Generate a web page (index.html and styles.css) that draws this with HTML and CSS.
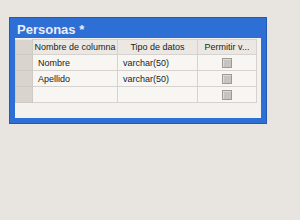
FILE: index.html
```html
<!DOCTYPE html>
<html lang="es">
<head>
    <meta charset="UTF-8">
    <title>Personas</title>
    <link rel="stylesheet" href="styles.css">
</head>
<body>
    <div class="panel">
        <div class="panel-title">Personas *</div>
        <div class="panel-body">
            <table class="grid">
                <colgroup>
                    <col class="c-sel">
                    <col class="c-name">
                    <col class="c-type">
                    <col class="c-null">
                </colgroup>
                <thead>
                    <tr>
                        <th class="sel"></th>
                        <th>Nombre de columna</th>
                        <th>Tipo de datos</th>
                        <th>Permitir v...</th>
                    </tr>
                </thead>
                <tbody>
                    <tr>
                        <td class="sel"></td>
                        <td>Nombre</td>
                        <td>varchar(50)</td>
                        <td class="chk"><span class="box"></span></td>
                    </tr>
                    <tr>
                        <td class="sel"></td>
                        <td>Apellido</td>
                        <td>varchar(50)</td>
                        <td class="chk"><span class="box"></span></td>
                    </tr>
                    <tr>
                        <td class="sel"></td>
                        <td></td>
                        <td></td>
                        <td class="chk"><span class="box"></span></td>
                    </tr>
                </tbody>
            </table>
        </div>
    </div>
</body>
</html>
```
FILE: styles.css
```css
body { margin: 0; background: #e8e5e1; font-family: "Liberation Sans", Arial, sans-serif; }
.panel { margin: 17px 0 0 9px; width: 258px; height: 107px; background: #2e6fd6; box-sizing: border-box; border: 1px solid #2259b8; display: flex; flex-direction: column; }
.panel-title { height: 20px; padding: 4px 0 0 7px; box-sizing: border-box; color: #e6eefb; font-weight: bold; font-size: 13px; line-height: 15px; }
.panel-body { flex: 1; margin: 0 5px 5px 5px; background: #f3f2ef; padding-top: 1px; }
.grid { border-collapse: collapse; table-layout: fixed; width: 241px; font-size: 9px; color: #222; }
.c-sel { width: 17px; }
.c-name { width: 85px; }
.c-type { width: 80px; }
.c-null { width: 59px; }
.grid th, .grid td { border: 1px solid #d6d3ce; padding: 0 0 0 5px; white-space: nowrap; overflow: hidden; }
.grid th { height: 14px; background: #ebe8e3; font-weight: normal; text-align: center; padding: 0; }
.grid td { height: 15px; background: #f7f6f3; }
.grid .sel { background: #d9d5ce; border-color: #cfcbc4; border-top-color: #ebe8e3; padding: 0; }
.grid .chk { text-align: center; padding: 0; }
.box { display: inline-block; width: 8px; height: 8px; vertical-align: middle; background: #c6c4c1; border: 1px solid #9c9996; box-shadow: inset 1px 1px 0 #dddbd8; }
```
